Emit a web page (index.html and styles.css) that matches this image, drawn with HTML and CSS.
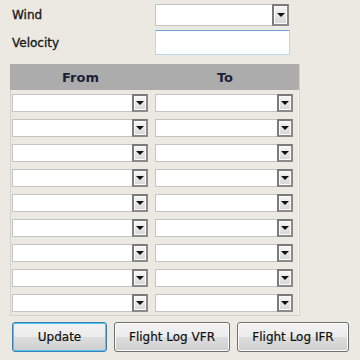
FILE: index.html
```html
<!DOCTYPE html>
<html>
<head>
<meta charset="utf-8">
<link rel="stylesheet" href="styles.css">
</head>
<body>
<div class="page">
  <div class="fields">
    <div class="field">
      <span class="label">Wind</span>
      <div class="combo combo-wind"><span class="val"></span><span class="arrow"></span></div>
    </div>
    <div class="field">
      <span class="label">Velocity</span>
      <div class="textbox"></div>
    </div>
  </div>

  <div class="panel">
    <div class="head"><span>From</span><span>To</span></div>
    <div class="rows">
      <div class="row"><div class="combo"><span class="val"></span><span class="arrow"></span></div><div class="combo"><span class="val"></span><span class="arrow"></span></div></div>
      <div class="row"><div class="combo"><span class="val"></span><span class="arrow"></span></div><div class="combo"><span class="val"></span><span class="arrow"></span></div></div>
      <div class="row"><div class="combo"><span class="val"></span><span class="arrow"></span></div><div class="combo"><span class="val"></span><span class="arrow"></span></div></div>
      <div class="row"><div class="combo"><span class="val"></span><span class="arrow"></span></div><div class="combo"><span class="val"></span><span class="arrow"></span></div></div>
      <div class="row"><div class="combo"><span class="val"></span><span class="arrow"></span></div><div class="combo"><span class="val"></span><span class="arrow"></span></div></div>
      <div class="row"><div class="combo"><span class="val"></span><span class="arrow"></span></div><div class="combo"><span class="val"></span><span class="arrow"></span></div></div>
      <div class="row"><div class="combo"><span class="val"></span><span class="arrow"></span></div><div class="combo"><span class="val"></span><span class="arrow"></span></div></div>
      <div class="row"><div class="combo"><span class="val"></span><span class="arrow"></span></div><div class="combo"><span class="val"></span><span class="arrow"></span></div></div>
      <div class="row"><div class="combo"><span class="val"></span><span class="arrow"></span></div><div class="combo"><span class="val"></span><span class="arrow"></span></div></div>
    </div>
  </div>

  <div class="buttons">
    <button class="btn btn-focus btn-update">Update</button>
    <button class="btn btn-vfr">Flight Log VFR</button>
    <button class="btn btn-ifr">Flight Log IFR</button>
  </div>
</div>
</body>
</html>
```
FILE: styles.css
```css
html, body {
  margin: 0;
  padding: 0;
  background: #ece9e2;
}
body {
  font-family: "DejaVu Sans", Verdana, sans-serif;
  color: #1e1e1e;
}
.page {
  width: 360px;
  height: 360px;
  padding: 4px 0 0 10px;
  box-sizing: border-box;
}
.fields {
  display: flex;
  flex-direction: column;
  gap: 4px;
}
.field {
  display: flex;
  align-items: center;
}
.label {
  width: 143px;
  padding-left: 2px;
  font-size: 12px;
  color: #1a1a1a;
  -webkit-text-stroke: 0.35px #1a1a1a;
}
.combo {
  display: flex;
  box-sizing: border-box;
  height: 18px;
  background: #fff;
  border: 1px solid #c4c4c4;
  border-right: none;
}
.combo .val {
  flex: 1;
}
.combo .arrow {
  width: 16px;
  box-sizing: border-box;
  margin: -1px 0;
  border: 2px solid #8a8a8a;
  border-top-color: #7a7a7a;
  border-left-color: #7a7a7a;
  box-shadow: inset 0 0 0 1px #fbfbfb;
  background: linear-gradient(#f7f7f7, #d6d6d6);
  display: flex;
  align-items: center;
  justify-content: center;
}
.combo .arrow::after {
  content: "";
  width: 0;
  height: 0;
  border-left: 4px solid transparent;
  border-right: 4px solid transparent;
  border-top: 4px solid #111;
}
.combo-wind {
  width: 134px;
  height: 22px;
}
.combo-wind .arrow {
  width: 17px;
}
.textbox {
  width: 135px;
  height: 25px;
  box-sizing: border-box;
  background: #fff;
  border: 1px solid #b9d6ee;
  border-top-color: #6fa3d6;
}
.panel {
  margin-top: 9px;
  width: 290px;
  height: 252px;
  box-sizing: border-box;
  border: 1px solid #d4d1ca;
  border-top: none;
  box-shadow: inset -1px 0 0 #f7f6f2;
}
.head {
  height: 26px;
  background: #acacac;
  margin: 0 0 0 -1px;
  display: grid;
  grid-template-columns: 137px 138px;
  column-gap: 7px;
  padding-left: 2px;
  align-items: center;
  font-size: 13px;
  font-weight: bold;
  color: #1b2238;
  text-align: center;
}
.rows {
  display: flex;
  flex-direction: column;
  gap: 7px;
  padding: 4px 0 0 1px;
}
.row {
  display: grid;
  grid-template-columns: 136px 138px;
  column-gap: 7px;
}
.buttons {
  display: flex;
  gap: 7px;
  margin-top: 6px;
  padding-left: 2px;
}
.btn {
  height: 30px;
  box-sizing: border-box;
  font-family: "DejaVu Sans", Verdana, sans-serif;
  font-size: 12px;
  color: #111;
  -webkit-text-stroke: 0.2px #111;
  border: 1px solid #707070;
  border-radius: 3px;
  background: linear-gradient(#f2f2f2 0%, #ebebeb 50%, #dddddd 51%, #cfcfcf 100%);
  box-shadow: inset 0 0 0 1px #fbfbfb;
  padding: 0;
}
.btn-focus {
  border-color: #3c7fb1;
  box-shadow: inset 0 0 0 1px #48c6f6;
}
.btn-update { width: 95px; }
.btn-vfr { width: 116px; }
.btn-ifr { width: 112px; }
```
